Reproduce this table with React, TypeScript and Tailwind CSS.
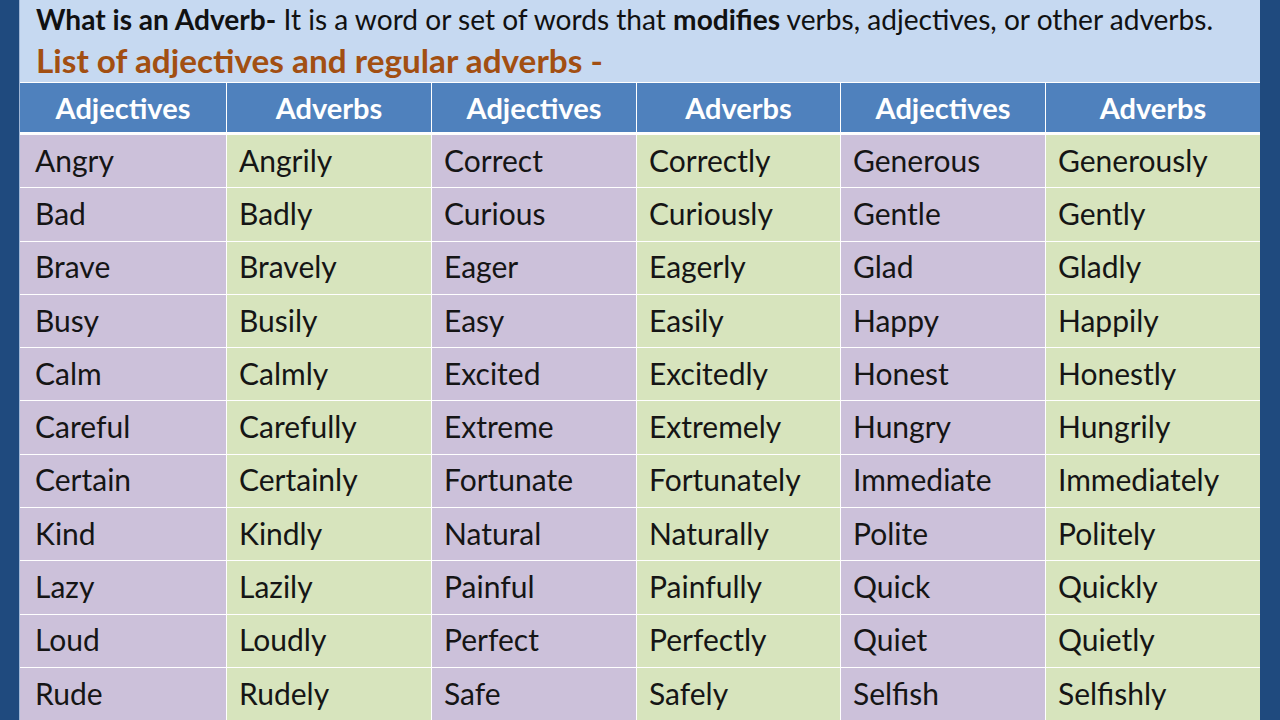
const ROWS = [
  ["Angry", "Angrily", "Correct", "Correctly", "Generous", "Generously"],
  ["Bad", "Badly", "Curious", "Curiously", "Gentle", "Gently"],
  ["Brave", "Bravely", "Eager", "Eagerly", "Glad", "Gladly"],
  ["Busy", "Busily", "Easy", "Easily", "Happy", "Happily"],
  ["Calm", "Calmly", "Excited", "Excitedly", "Honest", "Honestly"],
  ["Careful", "Carefully", "Extreme", "Extremely", "Hungry", "Hungrily"],
  ["Certain", "Certainly", "Fortunate", "Fortunately", "Immediate", "Immediately"],
  ["Kind", "Kindly", "Natural", "Naturally", "Polite", "Politely"],
  ["Lazy", "Lazily", "Painful", "Painfully", "Quick", "Quickly"],
  ["Loud", "Loudly", "Perfect", "Perfectly", "Quiet", "Quietly"],
  ["Rude", "Rudely", "Safe", "Safely", "Selfish", "Selfishly"],
];

const HEADERS = ["Adjectives", "Adverbs", "Adjectives", "Adverbs", "Adjectives", "Adverbs"];

export default function App() {
  return (
    <div
      className="h-[720px] w-[1280px] overflow-hidden bg-[#1f4a7e] pl-[19px] pr-[20px]"
      style={{ fontFamily: "Lato, 'Open Sans', sans-serif" }}
    >
      <div className="h-full bg-[#c6d9f1] border-l border-[#9fb6d6]">
        {/* Intro */}
        <div className="h-[82px] px-[16px] pt-[2px]">
          <p className="text-[28.1px] leading-[34px] text-[#111] whitespace-nowrap">
            <span className="font-bold">What is an Adverb-</span> It is a word or set of words that{" "}
            <span className="font-bold">modifies</span> verbs, adjectives, or other adverbs.
          </p>
          <p className="mt-[3px] text-[33.3px] leading-[42px] font-bold text-[#a24f12] whitespace-nowrap">
            List of adjectives and regular adverbs -
          </p>
        </div>

        {/* Table */}
        <div className="border-t border-white bg-white">
          <div className="grid grid-cols-[206px_204px_204px_203px_204px_1fr] gap-x-px">
            {HEADERS.map((h, i) => (
              <div
                key={i}
                className="flex h-[49px] items-center justify-center bg-[#4f81bd] text-[29px] font-bold text-white"
              >
                {h}
              </div>
            ))}
          </div>
          <div className="mt-[3px] grid grid-cols-[206px_204px_204px_203px_204px_1fr] gap-x-px gap-y-px">
            {ROWS.flat().map((w, i) => (
              <div
                key={i}
                className={
                  "flex h-[52.3px] items-center pb-[2px] text-[30px] text-[#151515] " +
                  (i % 6 === 0 ? "pl-[15px] " : "pl-[12px] ") +
                  (i % 2 === 0 ? "bg-[#ccc1da]" : "bg-[#d7e4bd]")
                }
              >
                {w}
              </div>
            ))}
          </div>
        </div>
      </div>
    </div>
  );
}
